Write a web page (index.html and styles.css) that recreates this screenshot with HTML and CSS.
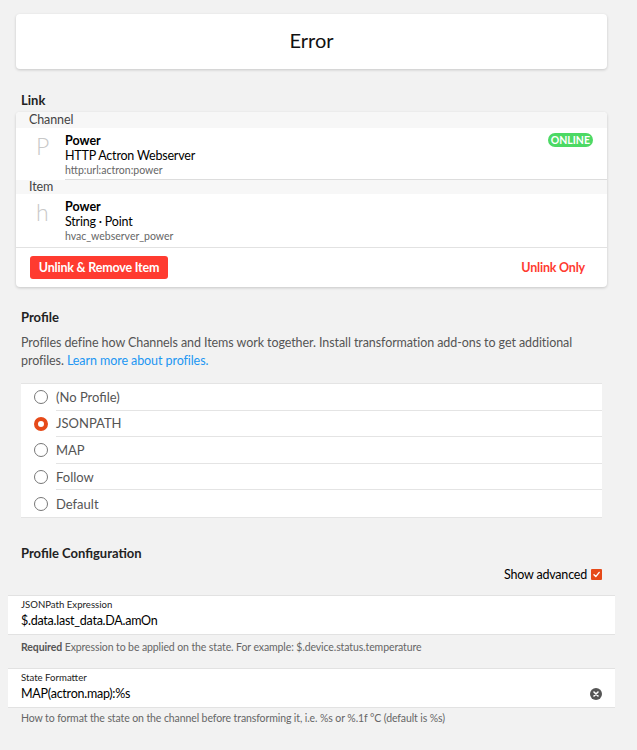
FILE: index.html
```html
<!DOCTYPE html>
<html>
<head>
<meta charset="utf-8">
<link rel="stylesheet" href="styles.css">
</head>
<body>
<div class="page">
  <div class="card title-card"><h1>Error</h1></div>

  <div class="block-title first">Link</div>
  <div class="card link-card">
    <div class="group-title">Channel</div>
    <div class="link-item channel">
      <div class="media">P</div>
      <div class="inner bordered">
        <div class="row-top">
          <div class="item-title">Power</div>
          <span class="badge">ONLINE</span>
        </div>
        <div class="item-sub">HTTP Actron Webserver</div>
        <div class="item-foot">http:url:actron:power</div>
      </div>
    </div>
    <div class="group-title small">Item</div>
    <div class="link-item item">
      <div class="media">h</div>
      <div class="inner">
        <div class="row-top">
          <div class="item-title">Power</div>
        </div>
        <div class="item-sub">String · Point</div>
        <div class="item-foot">hvac_webserver_power</div>
      </div>
    </div>
    <div class="card-footer">
      <button class="btn-fill">Unlink &amp; Remove Item</button>
      <button class="btn-text">Unlink Only</button>
    </div>
  </div>

  <div class="block-title profile">Profile</div>
  <p class="desc">Profiles define how Channels and Items work together. Install transformation add-ons to get additional profiles. <a href="#">Learn more about profiles.</a></p>

  <ul class="radio-list">
    <li><span class="radio"></span><span class="label">(No Profile)</span></li>
    <li><span class="radio checked"></span><span class="label">JSONPATH</span></li>
    <li><span class="radio"></span><span class="label">MAP</span></li>
    <li><span class="radio"></span><span class="label">Follow</span></li>
    <li><span class="radio"></span><span class="label">Default</span></li>
  </ul>

  <div class="block-title conf">Profile Configuration</div>
  <div class="advanced">Show advanced <span class="checkbox"><svg viewBox="0 0 11 11" width="11" height="11"><path d="M3 5.8 L4.8 7.6 L8.2 3.4" fill="none" stroke="#fff" stroke-width="1.4" stroke-linecap="round" stroke-linejoin="round"/></svg></span></div>

  <div class="input-block">
    <div class="input-label">JSONPath Expression</div>
    <div class="input-value">$.data.last_data.DA.amOn</div>
  </div>
  <div class="help"><b>Required</b> Expression to be applied on the state. For example: $.device.status.temperature</div>

  <div class="input-block second">
    <div class="input-label">State Formatter</div>
    <div class="input-value">MAP(actron.map):%s</div>
    <span class="clear"><svg viewBox="0 0 12 12" width="12" height="12"><circle cx="6" cy="6" r="6" fill="#555"/><path d="M4 4 L8 8 M8 4 L4 8" stroke="#fff" stroke-width="1.6" stroke-linecap="round"/></svg></span>
  </div>
  <div class="help last">How to format the state on the channel before transforming it, i.e. %s or %.1f °C (default is %s)</div>
</div>
</body>
</html>
```

FILE: styles.css
```css
* { box-sizing: border-box; }
body {
  margin: 0;
  background: #f2f2f2;
  font-family: Lato, "Open Sans", sans-serif;
  color: #000;
}
.page {
  width: 622px;
  padding: 14px 0 20px;
}
.card {
  background: #fff;
  border-radius: 4px;
  box-shadow: 0 1px 3px rgba(0,0,0,0.18);
  margin: 0 15px 0 16px;
}
.title-card {
  height: 55px;
  display: flex;
  align-items: center;
  justify-content: center;
  padding-bottom: 3px;
}
.title-card h1 {
  margin: 0;
  font-size: 20px;
  font-weight: 400;
  color: #111;
}
.block-title {
  font-size: 13px;
  font-weight: 700;
  color: #222;
  margin: 22px 0 0 21px;
  height: 16px;
  line-height: 16px;
}
.block-title.first { margin-top: 23px; margin-bottom: 4px; }
.link-card { overflow: hidden; }
.group-title {
  background: #f7f7f7;
  font-size: 12.5px;
  letter-spacing: -0.1px;
  color: #444;
  padding-left: 13px;
  height: 16px;
  line-height: 16px;
}
.group-title.small { height: 14px; line-height: 13px; }
.link-item {
  display: flex;
  background: #fff;
}
.link-item.channel { height: 52px; }
.link-item.item { height: 53px; }
.media {
  width: 49px;
  padding-left: 20px;
  padding-top: 6px;
  font-size: 23px;
  font-weight: 300;
  color: #c8c8c8;
  line-height: 24px;
}
.inner {
  flex: 1;
  padding: 6px 14px 0 0;
}
.inner.bordered { border-bottom: 1px solid #ddd; }
.row-top {
  display: flex;
  justify-content: space-between;
  align-items: flex-start;
  height: 14px;
  line-height: 14px;
}
.item-title {
  font-size: 12.5px;
  font-weight: 700;
}
.badge {
  background: #4cd964;
  color: #fff;
  font-size: 10.5px;
  font-weight: 700;
  border-radius: 8px;
  padding: 0 3px;
  height: 14px;
  line-height: 14px;
  margin-top: -1px;
}
.item-sub {
  font-size: 12.5px;
  letter-spacing: -0.2px;
  height: 16px;
  line-height: 16px;
}
.item-foot {
  font-size: 10.5px;
  color: #666;
  height: 12px;
  line-height: 12px;
}
.card-footer {
  border-top: 1px solid #e2e2e2;
  height: 40px;
  display: flex;
  align-items: center;
  justify-content: space-between;
  padding: 0 22px 0 14px;
}
.btn-fill {
  background: #ff3b30;
  color: #fff;
  border: 0;
  border-radius: 3px;
  height: 23px;
  width: 138px;
  font: 700 12.5px Lato, "Open Sans", sans-serif;
  letter-spacing: -0.2px;
  white-space: nowrap;
  padding: 0;
}
.btn-text {
  background: none;
  border: 0;
  color: #ff3b30;
  font: 700 12.5px Lato, "Open Sans", sans-serif;
  letter-spacing: -0.2px;
  padding: 0;
}
.desc {
  margin: 9px 20px 0 21px;
  font-size: 12.5px;
  letter-spacing: -0.08px;
  line-height: 18px;
  color: #555;
}
.desc a { color: #2196f3; text-decoration: none; }
.radio-list {
  list-style: none;
  margin: 13px 20px 0 21px;
  padding: 0;
  background: #fff;
  border-top: 1px solid #e4e4e4;
  border-bottom: 1px solid #e4e4e4;
}
.radio-list li {
  display: flex;
  align-items: center;
  height: 26.6px;
}
.radio {
  width: 14px;
  height: 14px;
  border: 1.3px solid #777;
  border-radius: 50%;
  margin: 0 8px 0 13px;
  flex: none;
}
.radio.checked {
  border: 4.5px solid #e64a19;
  background: #fff;
}
.label {
  flex: 1;
  height: 100%;
  display: flex;
  align-items: center;
  font-size: 13px;
  color: #555;
  border-bottom: 1px solid #e4e4e4;
}
.radio-list li:last-child .label { border-bottom: 0; }
.block-title.conf { margin-top: 27px; }
.advanced {
  display: flex;
  justify-content: flex-end;
  align-items: center;
  margin: 6px 20px 0 0;
  font-size: 12.5px;
  letter-spacing: -0.2px;
  height: 16px;
}
.checkbox {
  width: 11px;
  height: 11px;
  background: #e64a19;
  border-radius: 1px;
  margin-left: 4px;
  display: inline-flex;
}
.input-block {
  position: relative;
  margin: 12px 7px 0 8px;
  background: #fff;
  border-top: 1px solid #e2e2e2;
  border-bottom: 1px solid #e2e2e2;
  height: 40px;
  padding: 2px 13px 0;
}
.input-block.second { margin-top: 14px; }
.input-label {
  font-size: 9.6px;
  color: #222;
  height: 14px;
  line-height: 14px;
}
.input-value {
  font-size: 12.5px;
  letter-spacing: -0.25px;
  height: 18px;
  line-height: 18px;
}
.clear {
  position: absolute;
  right: 13px;
  top: 19px;
  display: flex;
}
.help {
  margin: 5px 0 0 21px;
  font-size: 10.5px;
  letter-spacing: -0.1px;
  color: #666;
  line-height: 14px;
}
.help.last { margin-top: 3px; }
.help b { color: #555; font-weight: 700; }
```
